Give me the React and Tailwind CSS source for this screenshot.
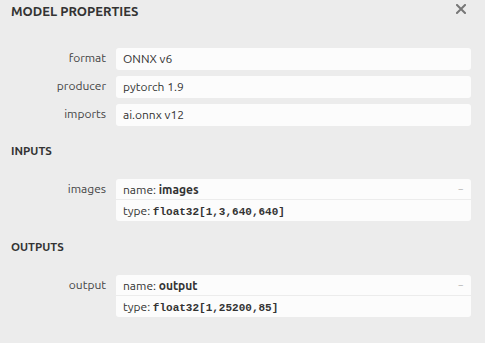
const sans = "font-['Ubuntu','Noto_Sans','Open_Sans',sans-serif]"
const mono = "font-['Liberation_Mono','DejaVu_Sans_Mono',monospace]"

function Heading({ children, className = "" }) {
  return (
    <div className={`px-[11px] h-4 leading-4 font-bold text-[#333] ${className}`}>
      {children}
    </div>
  )
}

function Prop({ label, value }) {
  return (
    <div className="flex">
      <div className="w-[116px] shrink-0 pr-[10px] text-right text-[12px] leading-[20px] text-[#444]">{label}</div>
      <div className="w-[355px] h-[22px] bg-[#fcfcfc] rounded-[3px] px-[7px] text-[12px] leading-[22px] text-[#333]">
        {value}
      </div>
    </div>
  )
}

function Arg({ label, name, type }) {
  return (
    <div className="flex">
      <div className="w-[116px] shrink-0 pr-[10px] text-right text-[12px] leading-[20px] text-[#444]">{label}</div>
      <div className="w-[355px] bg-[#fcfcfc] rounded-[3px] text-[12px] text-[#333]">
        <div className="h-[21px] px-[7px] leading-[21px] flex justify-between border-b border-[#ececec]">
          <span>
            name: <span className="font-bold">{name}</span>
          </span>
          <span className="text-[#aaa] text-[9px] pr-[1px]">–</span>
        </div>
        <div className="h-[21px] px-[7px] leading-[21px]">
          type: <span className={`${mono} font-bold text-[11px]`}>{type}</span>
        </div>
      </div>
    </div>
  )
}

export default function App() {
  return (
    <div className={`w-[485px] h-[343px] bg-[#ececec] ${sans} overflow-hidden`}>
      <div className="flex justify-between pt-[3px]">
        <Heading className="text-[13px]">MODEL PROPERTIES</Heading>
        <svg className="mr-[19px] mt-[1px]" width="10" height="10" viewBox="0 0 10 10">
          <path d="M1 1L9 9M9 1L1 9" stroke="#777" strokeWidth="2" strokeLinecap="square" />
        </svg>
      </div>

      <div className="mt-[29px] flex flex-col gap-[6px]">
        <Prop label="format" value="ONNX v6" />
        <Prop label="producer" value="pytorch 1.9" />
        <Prop label="imports" value="ai.onnx v12" />
      </div>

      <Heading className="mt-[17px] text-[11.5px]">INPUTS</Heading>
      <div className="mt-[20px]">
        <Arg label="images" name="images" type="float32[1,3,640,640]" />
      </div>

      <Heading className="mt-[18px] text-[11.5px]">OUTPUTS</Heading>
      <div className="mt-[20px]">
        <Arg label="output" name="output" type="float32[1,25200,85]" />
      </div>
    </div>
  )
}
